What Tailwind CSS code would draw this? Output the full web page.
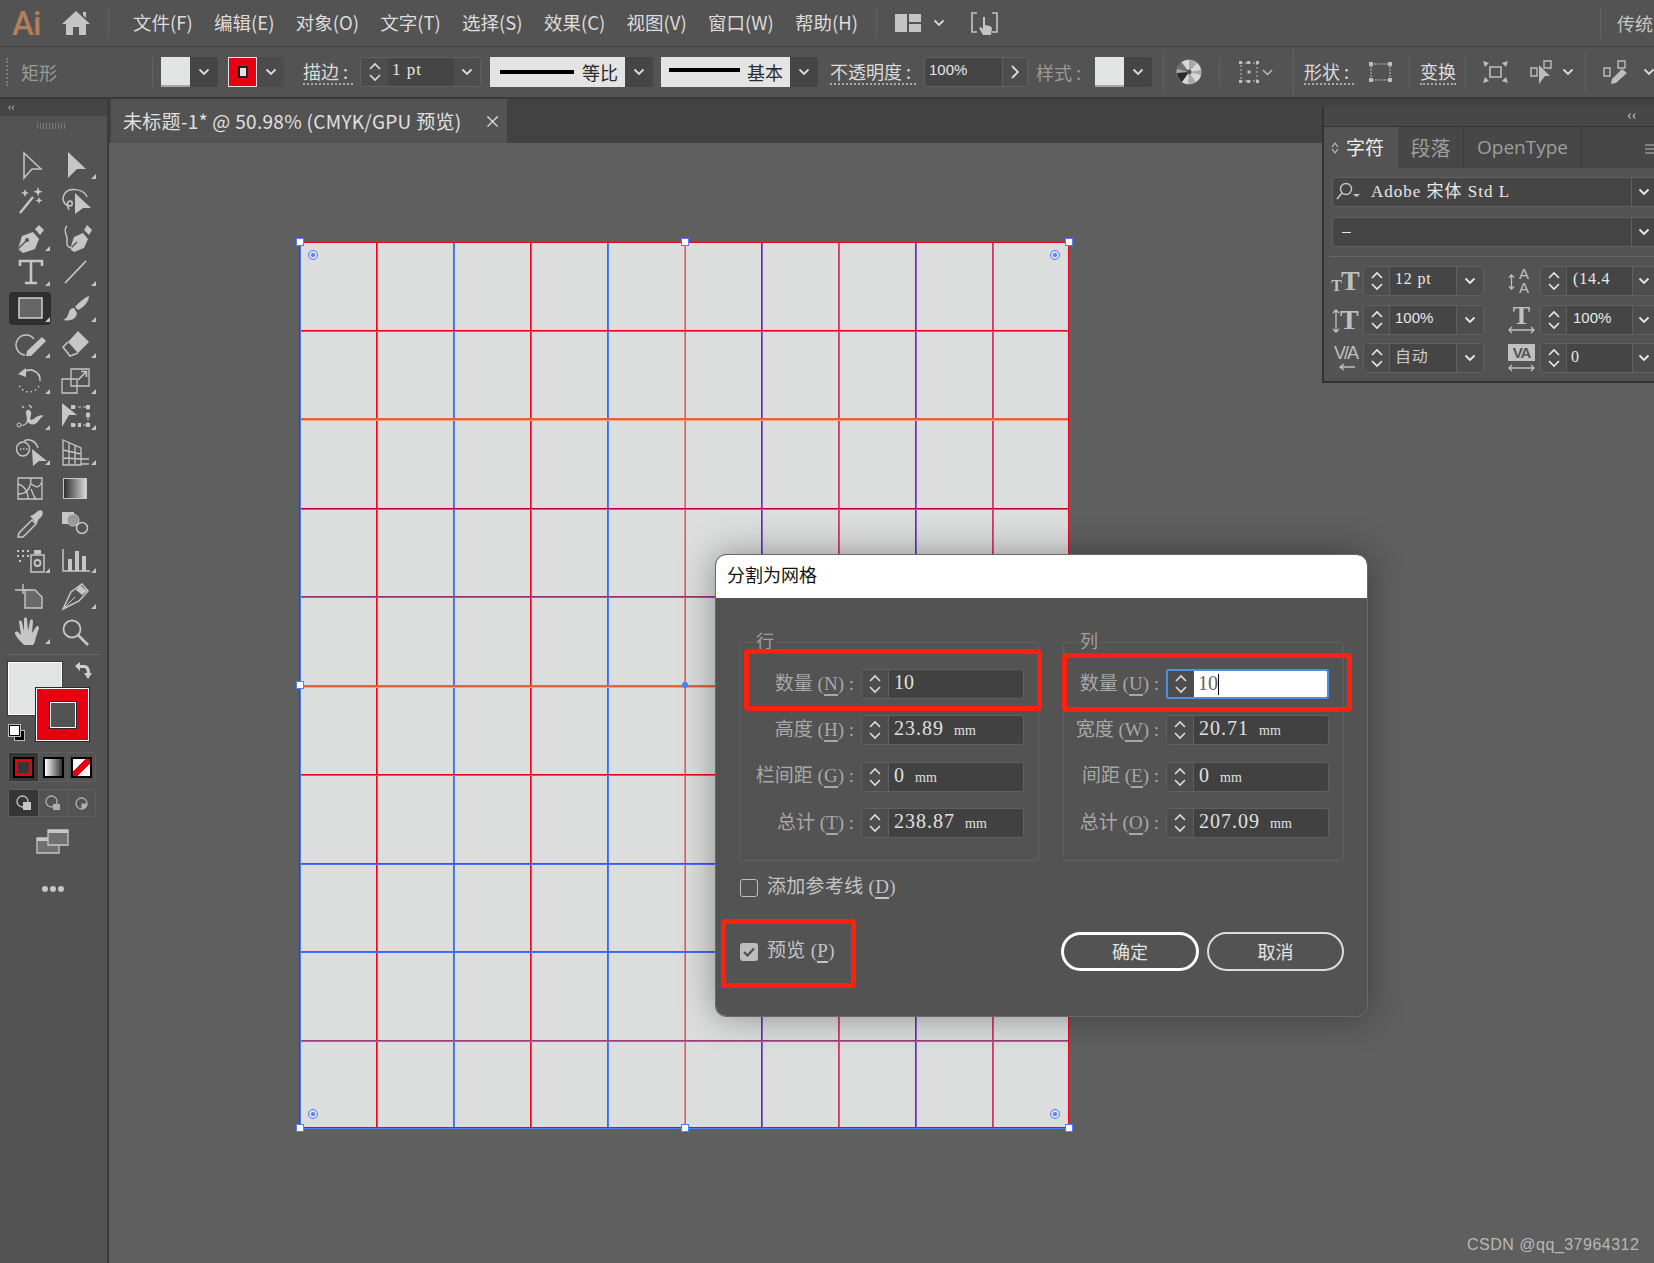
<!DOCTYPE html>
<html lang="zh-CN">
<head>
    <meta charset="UTF-8">
    <title>未标题-1* @ 50.98% (CMYK/GPU 预览)</title>
    <script src="https://cdn.jsdelivr.net/npm/@tailwindcss/browser@4"></script>
</head>
<body class="bg-[#5f5f5f]">
    <!-- shared small glyphs -->
    <svg class="hidden">
        <symbol id="chev" viewBox="0 0 12 8"><path d="M1.5 1.5 6 6l4.5-4.5" fill="none" stroke="currentColor" stroke-width="1.8"/></symbol>
        <symbol id="spin" viewBox="0 0 14 24"><path d="M2 9l5-5 5 5M2 15l5 5 5-5" fill="none" stroke="currentColor" stroke-width="1.6"/></symbol>
        <symbol id="tri" viewBox="0 0 40 36"><path d="M40 27v5h-5z" fill="currentColor"/></symbol>
    </svg>

    <div class="relative w-[1654px] h-[1263px] overflow-hidden flex flex-col font-['Noto_Sans_CJK_SC',sans-serif] text-[#dcdcdc] bg-[#5f5f5f]">

        <!-- menu bar -->
        <header class="h-[47px] shrink-0 flex items-center *:shrink-0 bg-[#535353] border-b border-[#404040] text-[18.5px] whitespace-nowrap">
            <span class="ml-[12px] w-[27px] text-[33px] leading-none text-[#b27f5b] font-['Roboto',sans-serif] font-medium tracking-[-1px]">Ai</span>
            <svg class="ml-[23px] w-[28px] h-[24px] text-[#c4c4c4]" viewBox="0 0 28 24"><path d="M14 0 28 13h-4v11h-7v-8h-6v8H4V13H0zM21 1h3v6l-3-3z" fill="currentColor"/></svg>
            <div class="ml-[18px] w-px h-[30px] bg-[#626262]"></div>
            <nav class="ml-[24px] w-[725px] flex justify-between">
                <span>文件(F)</span>
                <span>编辑(E)</span>
                <span>对象(O)</span>
                <span>文字(T)</span>
                <span>选择(S)</span>
                <span>效果(C)</span>
                <span>视图(V)</span>
                <span>窗口(W)</span>
                <span>帮助(H)</span>
            </nav>
            <div class="ml-[18px] w-px h-[30px] bg-[#626262]"></div>
            <svg class="ml-[18px] w-[26px] h-[18px] text-[#c4c4c4]" viewBox="0 0 26 18"><path d="M0 0h12v18H0zM14 0h12v8H14zM14 10h12v8H14z" fill="currentColor"/></svg>
            <svg class="ml-[12px] w-[12px] h-[8px] text-[#d8d8d8]"><use href="#chev"/></svg>
            <svg class="ml-[26px] w-[27px] h-[23px] text-[#c4c4c4]" viewBox="0 0 27 23"><path d="M6 1H1v19h5M21 1h5v19h-5" fill="none" stroke="currentColor" stroke-width="1.6"/><path d="M12 5h2v8l5 1 2 2-1 7h-8l-4-7 2-1 2 2z" fill="currentColor"/></svg>
            <div class="ml-[602px] w-px h-[30px] bg-[#626262]"></div>
            <span class="ml-[16px] text-[18px] text-[#c8c8c8]">传统</span>
        </header>

        <!-- control bar -->
        <div class="h-[52px] shrink-0 flex items-center *:shrink-0 bg-[#535353] border-b-2 border-[#3a3a3a] text-[18px] whitespace-nowrap">
            <div class="ml-[6px] w-[2px] h-[28px] border-l-2 border-dotted border-[#7a7a7a]"></div>
            <span class="ml-[13px] w-[36px] text-[#9a9a9a]">矩形</span>
            <div class="ml-[95px] w-px h-[30px] bg-[#626262]"></div>
            <div class="ml-[8px] w-[57px] h-[30px] flex rounded-[3px] bg-[#454545]">
                <div class="w-[29px] bg-[#e2e3e3] border-b-2 border-[#a8a8a8]"></div>
                <div class="flex-1 flex items-center justify-center"><svg class="w-[12px] h-[8px]"><use href="#chev"/></svg></div>
            </div>
            <div class="ml-[10px] w-[56px] h-[30px] flex rounded-[3px] bg-[#4b4b4b]">
                <div class="w-[29px] bg-[#e60012] border border-[#e2e3e3] flex items-center justify-center"><div class="w-[10px] h-[12px] bg-[#e2e3e3] border-2 border-[#222]"></div></div>
                <div class="flex-1 flex items-center justify-center"><svg class="w-[12px] h-[8px]"><use href="#chev"/></svg></div>
            </div>
            <span class="ml-[19px] w-[50px] border-b-2 border-dotted border-[#a8a8a8] leading-[24px]">描边 :</span>
            <div class="ml-[7px] w-[121px] h-[30px] flex rounded-[3px] border border-[#606060] bg-[#454545] font-['Liberation_Serif','Noto_Sans_CJK_SC',serif]">
                <div class="w-[27px] flex items-center justify-center bg-[#4d4d4d]"><svg class="w-[14px] h-[24px]"><use href="#spin"/></svg></div>
                <div class="w-[66px] pl-[4px] text-[17px] tracking-[1px] leading-[24px] text-[#e6e6e6]">1 pt</div>
                <div class="flex-1 flex items-center justify-center bg-[#4d4d4d]"><svg class="w-[12px] h-[8px]"><use href="#chev"/></svg></div>
            </div>
            <div class="ml-[9px] w-[163px] h-[30px] flex rounded-[3px] bg-[#454545]">
                <div class="w-[135px] bg-[#e4e4e4] flex items-center pl-[10px] text-[#2a2a2a]"><div class="w-[74px] h-[4px] bg-black"></div><span class="ml-[8px]">等比</span></div>
                <div class="flex-1 flex items-center justify-center"><svg class="w-[12px] h-[8px]"><use href="#chev"/></svg></div>
            </div>
            <div class="ml-[8px] w-[157px] h-[30px] flex rounded-[3px] bg-[#454545]">
                <div class="w-[129px] bg-[#e4e4e4] flex items-center pl-[8px] text-[#2a2a2a]"><div class="w-[71px] h-[4px] bg-black -mt-[4px]"></div><span class="ml-[7px]">基本</span></div>
                <div class="flex-1 flex items-center justify-center"><svg class="w-[12px] h-[8px]"><use href="#chev"/></svg></div>
            </div>
            <span class="ml-[12px] w-[86px] border-b-2 border-dotted border-[#a8a8a8] leading-[24px]">不透明度 :</span>
            <div class="ml-[8px] w-[104px] h-[30px] flex rounded-[3px] border border-[#606060] bg-[#454545]">
                <div class="w-[77px] pl-[4px] text-[15px] leading-[24px] text-[#e6e6e6] font-['Liberation_Sans',sans-serif]">100%</div>
                <div class="flex-1 flex items-center justify-center border-l border-[#606060] bg-[#4d4d4d]"><svg class="w-[8px] h-[14px]" viewBox="0 0 8 14"><path d="M1 1l6 6-6 6" fill="none" stroke="currentColor" stroke-width="1.8"/></svg></div>
            </div>
            <span class="ml-[8px] w-[48px] text-[#9a9a9a]">样式 :</span>
            <div class="ml-[11px] w-[57px] h-[30px] flex rounded-[3px] bg-[#454545]">
                <div class="w-[29px] bg-[#e2e3e3] border-b-2 border-[#a8a8a8]"></div>
                <div class="flex-1 flex items-center justify-center"><svg class="w-[12px] h-[8px]"><use href="#chev"/></svg></div>
            </div>
            <div class="ml-[11px] w-px h-[40px] bg-[#626262]"></div>
            <svg class="ml-[12px] w-[26px] h-[26px]" viewBox="0 0 26 26"><circle cx="13" cy="13" r="12.5" fill="#a8a8a8"/><path d="M13 13 6 3a12 12 0 0 1 7-2zM13 13l12-2a12 12 0 0 0-4-7zM13 13l-7 10a12 12 0 0 0 6 2zM13 13l12 3a12 12 0 0 1-5 7z" fill="#d8d8d8"/><path d="M13 13 1 14a12 12 0 0 0 5 9z" fill="#2c2c2c"/><path d="M13 13 1 10a12 12 0 0 1 4-7z" fill="#707070"/><circle cx="13" cy="13" r="2.5" fill="#535353"/></svg>
            <div class="ml-[17px] w-px h-[30px] bg-[#626262]"></div>
            <svg class="ml-[18px] w-[36px] h-[24px] text-[#bdbdbd]" viewBox="0 0 36 24"><path d="M3 3h16v18H3z" fill="none" stroke="currentColor" stroke-dasharray="2 2"/><path d="M1 1h3v3H1zM9 1h3v3H9zM18 1h3v3h-3zM1 20h3v3H1zM9 20h3v3H9zM18 20h3v3h-3zM9.500 10.500h3v3h-3z" fill="currentColor"/><path d="M25 10l4.500 4.500L34 10" fill="none" stroke="currentColor" stroke-width="1.4"/></svg>
            <div class="ml-[19px] w-px h-[46px] bg-[#626262]"></div>
            <span class="ml-[10px] w-[50px] border-b-2 border-dotted border-[#a8a8a8] leading-[24px]">形状 :</span>
            <svg class="ml-[15px] w-[23px] h-[20px] text-[#bdbdbd]" viewBox="0 0 23 20"><path d="M2 2h19v16H2z" fill="none" stroke="currentColor" stroke-dasharray="2 1"/><path d="M0 0h4v4H0zM19 0h4v4h-4zM0 16h4v4H0zM19 16h4v4h-4z" fill="currentColor"/></svg>
            <div class="ml-[17px] w-px h-[30px] bg-[#626262]"></div>
            <span class="ml-[10px] w-[36px] border-b-2 border-dotted border-[#a8a8a8] leading-[24px]">变换</span>
            <div class="ml-[9px] w-px h-[30px] bg-[#626262]"></div>
            <svg class="ml-[17px] w-[25px] h-[22px] text-[#bdbdbd]" viewBox="0 0 25 22"><path d="M7 6h11v10H7z" fill="none" stroke="currentColor" stroke-width="1.6"/><path d="M0 0l6 2-4 4zM25 0l-2 6-4-4zM0 22l2-6 4 4zM25 22l-6-2 4-4z" fill="currentColor"/></svg>
            <svg class="ml-[21px] w-[25px] h-[24px] text-[#bdbdbd]" viewBox="0 0 25 24"><path d="M2 8h6v8H2zM15 1h7v7h-7z" fill="none" stroke="currentColor" stroke-width="1.4"/><path d="M10 5l11 11h-5l-6 8z" fill="currentColor"/></svg>
            <svg class="ml-[8px] w-[12px] h-[8px]"><use href="#chev"/></svg>
            <div class="ml-[11px] w-px h-[40px] bg-[#626262]"></div>
            <svg class="ml-[16px] w-[26px] h-[24px] text-[#bdbdbd]" viewBox="0 0 26 24"><path d="M2 8h6v8H2zM16 1h7v7h-7z" fill="none" stroke="currentColor" stroke-width="1.4"/><path d="M20 9l5 4-11 10-5 1 1-5z" fill="currentColor"/></svg>
            <svg class="ml-[15px] w-[12px] h-[8px]"><use href="#chev"/></svg>
        </div>

        <div class="flex-1 flex min-h-0">
            <!-- tools -->
            <aside class="w-[109px] shrink-0 bg-[#535353] border-r-2 border-[#3a3a3a] flex flex-col">
                <div class="h-[17px] bg-[#454545] pl-[8px] text-[11px] leading-[14px] text-[#c8c8c8]">‹‹</div>
                <div class="mt-[7px] ml-[37px] w-[29px] h-[6px] bg-[repeating-linear-gradient(90deg,#7a7a7a_0,#7a7a7a_1px,transparent_1px,transparent_3px)]"></div>
                <div class="mt-[18px] ml-[10px] w-[86px] grid grid-cols-[40px_40px] gap-x-[6px] auto-rows-[35.8px] text-[#c6c6c6]">
                    <svg class="w-10 h-9" viewBox="0 0 40 36"><path d="M14 6 31 22H22L14 31Z" fill="none" stroke="currentColor" stroke-width="1.5"/></svg>
                    <svg class="w-10 h-9" viewBox="0 0 40 36"><path d="M12 5 30 22H21L12 31Z" fill="currentColor"/><use href="#tri"/></svg>

                    <svg class="w-10 h-9" viewBox="0 0 40 36"><path d="M10 30 23 14" stroke="currentColor" stroke-width="2.4"/><path d="M15 6l1.200 3 3 1-3 1-1.200 3-1.200-3-3-1 3-1zM28 4l1.200 3.500 3.500 1.200-3.500 1.200L28 13.500l-1.200-3.600-3.500-1.200 3.500-1.200zM29 14l1 2.500 2.500 1-2.500 1-1 2.500-1-2.500-2.500-1 2.500-1z" fill="currentColor"/></svg>
                    <svg class="w-10 h-9" viewBox="0 0 40 36"><path d="M31 14C28 6 12 3 8 12c-3 6 2 11 6 11 3 0 3-5 0-5s-3 5-1 9" fill="none" stroke="currentColor" stroke-width="1.500"/><path d="M19 10 35 25H27L19 31Z" fill="currentColor"/></svg>

                    <svg class="w-10 h-9" viewBox="0 0 40 36"><path d="M8 30l4-13 11-4 6 7-4 10-12 4z" fill="currentColor"/><path d="M25 10l4-4 5 5-4 5z" fill="currentColor"/><path d="M8 30l8-8" stroke="#535353" stroke-width="1.4"/><circle cx="17" cy="21" r="2" fill="#535353"/><use href="#tri"/></svg>
                    <svg class="w-10 h-9" viewBox="0 0 40 36"><path d="M14 30l4-12 9-4 5 6-4 9-10 4z" fill="currentColor"/><path d="M28 11l3-5 5 5-3 5z" fill="currentColor"/><path d="M14 30l7-7" stroke="#535353" stroke-width="1.400"/><path d="M11 7c-5 5 1 9 0 14-1 5 1 8 5 8" fill="none" stroke="currentColor" stroke-width="1.500"/></svg>

                    <svg class="w-10 h-9" viewBox="0 0 40 36"><path d="M10 12V7h22v5M21 7v22M15 29h12" fill="none" stroke="currentColor" stroke-width="2.600"/><use href="#tri"/></svg>
                    <svg class="w-10 h-9" viewBox="0 0 40 36"><path d="M9 29 30 7" stroke="currentColor" stroke-width="1.800"/><use href="#tri"/></svg>

                    <svg class="w-10 h-9 overflow-visible" viewBox="0 0 40 36"><rect x="-1" y="2" width="42" height="33" rx="4" fill="#2f2f2f"/><rect x="9" y="8" width="23" height="20" fill="#666" stroke="#cfcfcf" stroke-width="1.500"/><use href="#tri"/></svg>
                    <svg class="w-10 h-9" viewBox="0 0 40 36"><path d="M33 6c0 6-6 12-11 14l-3-3C23 12 28 8 33 6z" fill="currentColor"/><path d="M18 18c-5 0-5 5-6 7-1 3-3 4-5 5 4 1 13 1 14-7z" fill="currentColor"/><use href="#tri"/></svg>

                    <svg class="w-10 h-9" viewBox="0 0 40 36"><path d="M24 13A10 10 0 1 0 15 29" fill="none" stroke="currentColor" stroke-width="1.500"/><path d="M16 30l1-5 15-14 4 4-15 15z" fill="currentColor"/><use href="#tri"/></svg>
                    <svg class="w-10 h-9" viewBox="0 0 40 36"><path d="M12 16 22 5l11 11-11 11z" fill="currentColor"/><path d="M12 16l-5 5 7 9 8-3" fill="none" stroke="currentColor" stroke-width="1.500"/><use href="#tri"/></svg>

                    <svg class="w-10 h-9" viewBox="0 0 40 36"><path d="M13 11a10 10 0 0 1 17 8" fill="none" stroke="currentColor" stroke-width="1.600"/><path d="M29 24a11 11 0 0 1-20-1" fill="none" stroke="currentColor" stroke-width="1.500" stroke-dasharray="1.500 3"/><path d="M8 12l8-6v9z" fill="currentColor"/><use href="#tri"/></svg>
                    <svg class="w-10 h-9" viewBox="0 0 40 36"><path d="M15 7h18v17H15zM6 17h15v14H6z" fill="none" stroke="currentColor" stroke-width="1.300"/><path d="M22 18l8-8M25 9.500h5.500V15" fill="none" stroke="currentColor" stroke-width="1.600"/><use href="#tri"/></svg>

                    <svg class="w-10 h-9" viewBox="0 0 40 36"><path d="M9 27c8 1 9-5 7-11-1-4 3-6 5-2 1 3-2 6 0 8 4-1 8-7 13-4-3 0-5 6-9 8-3 1-6 0-7-2-2 3-5 5-9 3z" fill="currentColor"/><circle cx="9" cy="27" r="2" fill="#535353" stroke="currentColor"/><path d="M19 7l3 3M12 8l2 2" stroke="currentColor" stroke-width="1.400"/><use href="#tri"/></svg>
                    <svg class="w-10 h-9" viewBox="0 0 40 36"><path d="M6 5 21 17H13L6 29Z" fill="currentColor"/><path d="M17 9h15v18H17" fill="none" stroke="currentColor" stroke-dasharray="3 2"/><path d="M15 7h4v4h-4zM30 7h4v4h-4zM30 25h4v4h-4zM15 25h4v4h-4zM22 25h3v4h-3zM30 15h4v4h-4z" fill="currentColor"/><use href="#tri"/></svg>

                    <svg class="w-10 h-9" viewBox="0 0 40 36"><ellipse cx="13" cy="16" rx="6.500" ry="7" fill="none" stroke="currentColor" stroke-width="1.400"/><path d="M14 8c5-3 12 0 14 7" fill="none" stroke="currentColor" stroke-width="1.400"/><path d="M10 16h9" stroke="currentColor" stroke-dasharray="1.500 1.500" stroke-width="1.500"/><path d="M22 16 37 28H29L23 33Z" fill="currentColor"/><use href="#tri"/></svg>
                    <svg class="w-10 h-9" viewBox="0 0 40 36"><path d="M7 7l18 8v17H7zM13 9v23M19 12v20M7 17l18 4M7 25l18 1M25 26h8M25 31h8" fill="none" stroke="currentColor" stroke-width="1.300"/><use href="#tri"/></svg>

                    <svg class="w-10 h-9" viewBox="0 0 40 36"><path d="M8 9h24v21H8zM8 25c8 0 13-4 13-16M8 15c5 1 10 6 10 15M21 15c4 2 7 6 11-2M21 20c2 4 2 7 5 10" fill="none" stroke="currentColor" stroke-width="1.300"/></svg>
                    <svg class="w-10 h-9" viewBox="0 0 40 36"><defs><linearGradient id="gradTool"><stop offset="0" stop-color="#2c2c2c"/><stop offset="1" stop-color="#dcdcdc"/></linearGradient></defs><rect x="7.500" y="9.500" width="23" height="20" fill="url(#gradTool)" stroke="currentColor"/></svg>

                    <svg class="w-10 h-9" viewBox="0 0 40 36"><path d="M8 32l1-4 13-13 4 4-13 13z" fill="none" stroke="currentColor" stroke-width="1.500"/><path d="M20 11l3-1 5-4c4-2 6 1 4 5l-4 4-1 4z" fill="currentColor"/></svg>
                    <svg class="w-10 h-9" viewBox="0 0 40 36"><path d="M6 7h12v12H6z" fill="currentColor"/><circle cx="17" cy="15" r="6" fill="#999" stroke="currentColor"/><circle cx="26" cy="23" r="5.500" fill="#535353" stroke="currentColor" stroke-width="1.500"/></svg>

                    <svg class="w-10 h-9" viewBox="0 0 40 36"><path d="M21 14h13v17H21z" fill="none" stroke="currentColor" stroke-width="1.500"/><circle cx="27.500" cy="22" r="3" fill="none" stroke="currentColor" stroke-width="1.800"/><path d="M24 9h7v4h-7z" fill="currentColor"/><path d="M7 9h2v2H7zM12 9h2v2h-2zM17 9h2v2h-2zM7 14h2v2H7zM12 14h2v2h-2zM17 14h2v2h-2zM9 19h2v2H9z" fill="currentColor"/><use href="#tri"/></svg>
                    <svg class="w-10 h-9" viewBox="0 0 40 36"><path d="M7 8v22h27" fill="none" stroke="currentColor" stroke-width="1.500"/><path d="M12 18h4v12h-4zM19 10h4v20h-4zM26 15h4v15h-4z" fill="currentColor"/><use href="#tri"/></svg>

                    <svg class="w-10 h-9" viewBox="0 0 40 36"><path d="M13 7v10M5 13h16" stroke="currentColor" stroke-width="1.400" fill="none"/><path d="M15 13h10l7 7v11H15z" fill="#6a6a6a" stroke="currentColor" stroke-width="1.400"/></svg>
                    <svg class="w-10 h-9" viewBox="0 0 40 36"><path d="M7 32 15 15 26 7l6 7-9 10z" fill="none" stroke="currentColor" stroke-width="1.500"/><path d="M24 8l7 6-5 4-6-5z" fill="currentColor"/><path d="M7 32l12-12" stroke="currentColor"/><use href="#tri"/></svg>

                    <svg class="w-10 h-9" viewBox="0 0 40 36"><path d="M14 33c-3-3-7-7-9-11-1-2 2-3 3-2l3 3-2-13c0-2 2-2 3 0l2 9 0-12c0-2 3-2 3 0l1 12 2-10c0-2 3-2 3 0l-1 12 4-6c1-2 3-1 3 1l-3 9c-1 3-1 6-3 8z" fill="currentColor"/><use href="#tri"/></svg>
                    <svg class="w-10 h-9" viewBox="0 0 40 36"><circle cx="16" cy="17" r="8.500" fill="none" stroke="currentColor" stroke-width="1.800"/><path d="M22 23l10 10" stroke="currentColor" stroke-width="2.600"/></svg>
                </div>
                <div class="mt-[6px] mx-[6px] h-px bg-[#666]"></div>
                <!-- fill / stroke -->
                <div class="relative mt-[7px] h-[79px] shrink-0">
                    <div class="absolute left-[8px] top-0 w-[54px] h-[53px] bg-[#e2e3e3] border border-white outline outline-1 outline-[#3a3a3a]"></div>
                    <div class="absolute left-[36px] top-[26px] w-[53px] h-[53px] bg-[#e60012] border border-white outline outline-1 outline-[#2a2a2a] flex items-center justify-center">
                        <div class="w-[26px] h-[26px] bg-[#535353] border border-white outline outline-1 outline-[#2a2a2a]"></div>
                    </div>
                    <svg class="absolute left-[74px] top-0 w-[18px] h-[18px] text-[#cfcfcf]" viewBox="0 0 18 18"><path d="M1 4l5-4v3h4c4 0 6 3 6 8h2l-4 6-4-6h3c0-3-1-5-3-5H6v3z" fill="currentColor"/></svg>
                    <div class="absolute left-[9px] top-[63px] w-[16px] h-[16px]">
                        <div class="absolute left-[5px] top-[5px] w-[11px] h-[11px] bg-black border border-[#bbb]"></div>
                        <div class="absolute left-0 top-0 w-[11px] h-[11px] bg-white border border-black outline outline-1 outline-[#bbb]"></div>
                    </div>
                </div>
                <!-- colour / gradient / none -->
                <div class="mt-[11px] ml-[8px] w-[88px] h-[30px] shrink-0 flex rounded-[3px] border border-[#5f5f5f]">
                    <div class="w-[29px] bg-[#363636] flex items-center justify-center"><div class="w-[21px] h-[21px] border-2 border-black bg-[#e60012] p-[3px]"><div class="w-full h-full bg-[#363636]"></div></div></div>
                    <div class="w-[30px] border-x border-[#5f5f5f] flex items-center justify-center"><div class="w-[21px] h-[21px] border-2 border-black bg-[linear-gradient(90deg,#fff,#333)]"></div></div>
                    <div class="flex-1 flex items-center justify-center"><div class="w-[21px] h-[21px] border-2 border-black bg-[linear-gradient(-45deg,#fff_0,#fff_38%,#e60012_38%,#e60012_62%,#fff_62%,#fff_100%)]"></div></div>
                </div>
                <!-- draw modes -->
                <div class="mt-[7px] ml-[8px] w-[88px] h-[28px] shrink-0 flex rounded-[3px] border border-[#5f5f5f]">
                    <div class="w-[29px] bg-[#363636] flex items-center justify-center"><svg class="w-[16px] h-[16px] text-[#c6c6c6]" viewBox="0 0 16 16"><circle cx="6.500" cy="6.500" r="5.500" fill="none" stroke="currentColor" stroke-width="1.300"/><path d="M7 7h8v8H7z" fill="currentColor"/></svg></div>
                    <div class="w-[30px] border-x border-[#5f5f5f] flex items-center justify-center"><svg class="w-[16px] h-[16px] text-[#b0b0b0]" viewBox="0 0 16 16"><circle cx="6.500" cy="6.500" r="5.500" fill="none" stroke="currentColor" stroke-width="1.300"/><path d="M8 9h7v6H8z" fill="currentColor"/></svg></div>
                    <div class="flex-1 flex items-center justify-center"><svg class="w-[13px] h-[13px] text-[#b0b0b0]" viewBox="0 0 13 13"><circle cx="6.500" cy="6.500" r="5.500" fill="none" stroke="currentColor" stroke-width="1.300"/><path d="M6.500 6.500h6a6 6 0 0 1-6 6z" fill="currentColor"/></svg></div>
                </div>
                <svg class="mt-[12px] ml-[36px] w-[33px] h-[25px] text-[#c6c6c6]" viewBox="0 0 33 25"><path d="M1 9h22v15H1z" fill="#707070" stroke="currentColor" stroke-width="1.300"/><path d="M1 9h22v3H1z" fill="currentColor"/><path d="M12 1h20v15H12z" fill="#707070" stroke="currentColor" stroke-width="1.300"/><path d="M12 1h20v3H12z" fill="currentColor"/></svg>
                <div class="mt-[32px] ml-[42px] flex gap-[2px]">
                    <div class="w-[6px] h-[6px] rounded-full bg-[#c6c6c6]"></div>
                    <div class="w-[6px] h-[6px] rounded-full bg-[#c6c6c6]"></div>
                    <div class="w-[6px] h-[6px] rounded-full bg-[#c6c6c6]"></div>
                </div>
            </aside>

            <main class="flex-1 flex flex-col min-w-0">
                <!-- doc tab -->
                <div class="h-[44px] shrink-0 bg-[#424242] flex">
                    <div class="ml-[2px] w-[396px] bg-[#535353] flex items-center pl-[12px] text-[19px] tracking-[.3px] text-[#e0e0e0] whitespace-nowrap">
                        <span>未标题-1* @ 50.98% (CMYK/GPU 预览)</span>
                        <span class="absolute left-[484px] text-[17px]">×</span>
                    </div>
                </div>
                <!-- canvas -->
                <div class="relative flex-1 bg-[#5f5f5f]">
                    <div class="absolute left-[191px] top-[99px] w-[769px] h-[886px] bg-[#dcdddd] shadow-[-1px_0_0_#a02030]">
                        <div class="absolute inset-0 flex">
                            <div class="flex-1 border-r border-[#ff0018] shadow-[1px_0_0_#9060c8]"></div>
                            <div class="flex-1 border-r border-[#d03a60] shadow-[1px_0_0_#5080ff]"></div>
                            <div class="flex-1 border-r border-[#ff0018] shadow-[1px_0_0_#9060c8]"></div>
                            <div class="flex-1 border-r border-[#d03a60] shadow-[1px_0_0_#5080ff]"></div>
                            <div class="flex-1 border-r border-[#e59090] shadow-[1px_0_0_#5080ff]"></div>
                            <div class="flex-1 border-r border-[#ff0018] shadow-[1px_0_0_#9060c8]"></div>
                            <div class="flex-1 border-r border-[#d03a60] shadow-[1px_0_0_#5080ff]"></div>
                            <div class="flex-1 border-r border-[#ff0018] shadow-[1px_0_0_#9060c8]"></div>
                            <div class="flex-1 border-r border-[#d03a60] shadow-[1px_0_0_#5080ff]"></div>
                            <div class="flex-1"></div>
                        </div>
                        <div class="absolute inset-0 flex flex-col">
                            <div class="flex-1 border-b border-[#f00020] shadow-[0_1px_0_#5080ff]"></div>
                            <div class="flex-1 border-b-2 border-[#e8603c] shadow-[0_1px_0_#f0a080]"></div>
                            <div class="flex-1 border-b border-[#c00030] shadow-[0_1px_0_#5080ff]"></div>
                            <div class="flex-1 border-b border-[#a03070] shadow-[0_1px_0_#4f70ff]"></div>
                            <div class="flex-1 border-b-2 border-[#e8603c] shadow-[0_1px_0_#f0a080]"></div>
                            <div class="flex-1 border-b border-[#f00020] shadow-[0_1px_0_#5080ff]"></div>
                            <div class="flex-1 border-b border-[#9a3a80] shadow-[0_1px_0_#4f70ff]"></div>
                            <div class="flex-1 border-b border-[#c04060] shadow-[0_1px_0_#3f6fff]"></div>
                            <div class="flex-1 border-b border-[#a04070] shadow-[0_1px_0_#5080ff]"></div>
                            <div class="flex-1"></div>
                        </div>
                        <!-- outer frame -->
                        <div class="absolute inset-0 border-y border-[#f00020] border-r border-r-[#f00020] border-l border-l-[#5080ff] shadow-[0_1px_0_#5080ff]"></div>
                        <!-- bounding box handles -->
                        <div class="absolute -left-[4px] -top-[4px] w-[8px] h-[8px] bg-white border border-[#4f80ff]"></div>
                        <div class="absolute left-[381px] -top-[4px] w-[8px] h-[8px] bg-white border border-[#4f80ff]"></div>
                        <div class="absolute -right-[4px] -top-[4px] w-[8px] h-[8px] bg-white border border-[#4f80ff]"></div>
                        <div class="absolute -left-[4px] top-[439px] w-[8px] h-[8px] bg-white border border-[#4f80ff]"></div>
                        <div class="absolute -left-[4px] -bottom-[4px] w-[8px] h-[8px] bg-white border border-[#4f80ff]"></div>
                        <div class="absolute left-[381px] -bottom-[4px] w-[8px] h-[8px] bg-white border border-[#4f80ff]"></div>
                        <div class="absolute -right-[4px] -bottom-[4px] w-[8px] h-[8px] bg-white border border-[#4f80ff]"></div>
                        <div class="absolute left-[382px] top-[440px] w-[6px] h-[6px] rounded-full bg-[#4f80ff]"></div>
                        <!-- live corners -->
                        <div class="absolute left-[8px] top-[8px] w-[10px] h-[10px] rounded-full border border-[#4f80ff] p-[2px]"><div class="w-full h-full rounded-full bg-[#4f80ff]"></div></div>
                        <div class="absolute right-[9px] top-[8px] w-[10px] h-[10px] rounded-full border border-[#4f80ff] p-[2px]"><div class="w-full h-full rounded-full bg-[#4f80ff]"></div></div>
                        <div class="absolute left-[8px] bottom-[9px] w-[10px] h-[10px] rounded-full border border-[#4f80ff] p-[2px]"><div class="w-full h-full rounded-full bg-[#4f80ff]"></div></div>
                        <div class="absolute right-[9px] bottom-[9px] w-[10px] h-[10px] rounded-full border border-[#4f80ff] p-[2px]"><div class="w-full h-full rounded-full bg-[#4f80ff]"></div></div>
                    </div>
                </div>
            </main>
        </div>

        <!-- character panel -->
        <section class="absolute left-[1322px] top-[107px] w-[340px] h-[276px] bg-[#535353] border-l-2 border-b-2 border-[#333] rounded-tl-[3px] flex flex-col font-['Liberation_Serif','Noto_Sans_CJK_SC',serif]">
            <div class="h-[20px] shrink-0 bg-[#474747] border-b border-[#333] pl-[303px] text-[14px] leading-[18px] text-[#c8c8c8]">‹‹</div>
            <div class="h-[41px] shrink-0 flex bg-[#474747] text-[20px] text-[#9e9e9e] font-['Noto_Sans_CJK_SC',sans-serif]">
                <div class="w-[74px] bg-[#535353] flex items-center pl-[7px] text-[#eee]">
                    <svg class="w-[8px] h-[12px] text-[#aaa] mr-[7px]" viewBox="0 0 8 12"><path d="M1 5l3-4 3 4M1 7l3 4 3-4" fill="none" stroke="currentColor" stroke-width="1.300"/></svg>
                    <span class="text-[19px]">字符</span>
                </div>
                <div class="w-[66px] border-r border-[#3c3c3c] flex items-center justify-center">段落</div>
                <div class="w-[118px] border-r border-[#3c3c3c] flex items-center justify-center font-['Open_Sans',sans-serif] text-[19px]">OpenType</div>
                <svg class="ml-[63px] mt-[17px] w-[11px] h-[10px] text-[#bbb]" viewBox="0 0 11 10"><path d="M0 1h11M0 5h11M0 9h11" stroke="currentColor" stroke-width="1.200"/></svg>
            </div>
            <div class="mt-[9px] ml-[8px] w-[330px] h-[30px] shrink-0 flex items-center rounded-[3px] border border-[#606060] bg-[#454545] text-[17px] tracking-[1px] text-[#e8e8e8]">
                <svg class="ml-[2px] w-[26px] h-[20px] text-[#c6c6c6]" viewBox="0 0 26 20"><circle cx="11" cy="7" r="5.500" fill="none" stroke="currentColor" stroke-width="1.400"/><path d="M7 11l-5 6" stroke="currentColor" stroke-width="1.600"/><path d="M18 12h7l-3.500 3z" fill="currentColor"/></svg>
                <span class="ml-[10px] whitespace-nowrap">Adobe 宋体 Std L</span>
                <div class="ml-auto w-[30px] h-full border-l border-[#606060] flex items-center pl-[6px]"><svg class="w-[12px] h-[8px]"><use href="#chev"/></svg></div>
            </div>
            <div class="mt-[10px] ml-[8px] w-[330px] h-[30px] shrink-0 flex items-center rounded-[3px] border border-[#606060] bg-[#454545] text-[#e8e8e8]">
                <span class="ml-[9px] w-[9px] h-px bg-[#e8e8e8]"></span>
                <div class="ml-auto w-[30px] h-full border-l border-[#606060] flex items-center pl-[6px]"><svg class="w-[12px] h-[8px]"><use href="#chev"/></svg></div>
            </div>
            <div class="mt-[9px] ml-[6px] w-[332px] h-px shrink-0 bg-[#666]"></div>
            <div class="mt-[9px] ml-[8px] grid grid-cols-[176px_150px] gap-y-[8.500px] text-[16px] tracking-[.8px] text-[#e8e8e8]">
                <div class="flex items-center h-[30px]">
                    <div class="w-[27px] h-[26px] shrink-0 flex items-end justify-center text-[#c0c0c0] font-bold tracking-normal leading-none"><span class="text-[16px] -mr-[1px]">T</span><span class="text-[28px] -mb-[1px]">T</span></div>
                    <div class="ml-[4px] w-[121px] h-[30px] flex rounded-[3px] border border-[#606060] bg-[#454545]">
                        <div class="w-[26px] flex items-center justify-center bg-[#4d4d4d] border-r border-[#606060]"><svg class="w-[14px] h-[24px]"><use href="#spin"/></svg></div>
                        <div class="w-[66px] pl-[5px] leading-[24px]">12 pt</div>
                        <div class="flex-1 flex items-center justify-center bg-[#4d4d4d] border-l border-[#606060]"><svg class="w-[12px] h-[8px]"><use href="#chev"/></svg></div>
                    </div>
                </div>
                <div class="flex items-center h-[30px]">
                    <div class="relative w-[27px] h-[30px] shrink-0 text-[#c0c0c0] font-['Liberation_Sans',sans-serif] text-[15px] tracking-normal leading-[15px]">
                        <svg class="absolute left-0 top-[8px] w-[7px] h-[16px]" viewBox="0 0 7 16"><path d="M3.500 1v14M1 3.500 3.500 1 6 3.500M1 12.500 3.500 15 6 12.500" fill="none" stroke="currentColor" stroke-width="1.300"/></svg>
                        <span class="absolute left-[11px] top-0">A</span>
                        <span class="absolute left-[11px] top-[14px]">A</span>
                    </div>
                    <div class="ml-[5px] w-[118px] h-[30px] flex rounded-l-[3px] border border-r-0 border-[#606060] bg-[#454545]">
                        <div class="w-[26px] shrink-0 flex items-center justify-center bg-[#4d4d4d] border-r border-[#606060]"><svg class="w-[14px] h-[24px]"><use href="#spin"/></svg></div>
                        <div class="w-[65px] shrink-0 pl-[6px] leading-[24px] whitespace-nowrap">(14.4</div>
                        <div class="flex-1 flex items-center pl-[5px] bg-[#4d4d4d] border-l border-[#606060]"><svg class="w-[12px] h-[8px]"><use href="#chev"/></svg></div>
                    </div>
                </div>
                <div class="flex items-center h-[30px]">
                    <div class="w-[27px] h-[26px] shrink-0 flex items-end text-[#c0c0c0] font-bold tracking-normal leading-none">
                        <svg class="w-[8px] h-[24px]" viewBox="0 0 8 24"><path d="M4 1v22M1 4l3-3 3 3M1 20l3 3 3-3" fill="none" stroke="currentColor" stroke-width="1.300"/></svg>
                        <span class="text-[28px] -mb-[1px]">T</span>
                    </div>
                    <div class="ml-[4px] w-[121px] h-[30px] flex rounded-[3px] border border-[#606060] bg-[#454545]">
                        <div class="w-[26px] flex items-center justify-center bg-[#4d4d4d] border-r border-[#606060]"><svg class="w-[14px] h-[24px]"><use href="#spin"/></svg></div>
                        <div class="w-[66px] pl-[5px] leading-[24px] font-['Liberation_Sans',sans-serif] text-[15px] tracking-normal">100%</div>
                        <div class="flex-1 flex items-center justify-center bg-[#4d4d4d] border-l border-[#606060]"><svg class="w-[12px] h-[8px]"><use href="#chev"/></svg></div>
                    </div>
                </div>
                <div class="flex items-center h-[30px]">
                    <div class="w-[27px] h-[28px] shrink-0 flex flex-col items-center text-[#c0c0c0] font-bold tracking-normal leading-[20px]">
                        <span class="text-[26px] h-[20px]">T</span>
                        <svg class="w-[27px] h-[8px]" viewBox="0 0 27 8"><path d="M1 4h25M4 1 1 4l3 3M23 1l3 3-3 3" fill="none" stroke="currentColor" stroke-width="1.300"/></svg>
                    </div>
                    <div class="ml-[5px] w-[118px] h-[30px] flex rounded-l-[3px] border border-r-0 border-[#606060] bg-[#454545]">
                        <div class="w-[26px] shrink-0 flex items-center justify-center bg-[#4d4d4d] border-r border-[#606060]"><svg class="w-[14px] h-[24px]"><use href="#spin"/></svg></div>
                        <div class="w-[65px] shrink-0 pl-[6px] leading-[24px] font-['Liberation_Sans',sans-serif] text-[15px] tracking-normal">100%</div>
                        <div class="flex-1 flex items-center pl-[5px] bg-[#4d4d4d] border-l border-[#606060]"><svg class="w-[12px] h-[8px]"><use href="#chev"/></svg></div>
                    </div>
                </div>
                <div class="flex items-center h-[30px]">
                    <div class="w-[27px] h-[28px] shrink-0 flex flex-col items-center text-[#c0c0c0] font-['Liberation_Sans',sans-serif] tracking-[-2px] leading-[18px]">
                        <span class="text-[18px] h-[19px]">V/A</span>
                        <svg class="w-[27px] h-[8px]" viewBox="0 0 27 8"><path d="M8 4h15M12 1 8 4l4 3" fill="none" stroke="currentColor" stroke-width="1.400"/></svg>
                    </div>
                    <div class="ml-[4px] w-[121px] h-[30px] flex rounded-[3px] border border-[#606060] bg-[#454545]">
                        <div class="w-[26px] flex items-center justify-center bg-[#4d4d4d] border-r border-[#606060]"><svg class="w-[14px] h-[24px]"><use href="#spin"/></svg></div>
                        <div class="w-[66px] pl-[5px] leading-[26px] text-[#c8c8c8]">自动</div>
                        <div class="flex-1 flex items-center justify-center bg-[#4d4d4d] border-l border-[#606060]"><svg class="w-[12px] h-[8px]"><use href="#chev"/></svg></div>
                    </div>
                </div>
                <div class="flex items-center h-[30px]">
                    <div class="w-[27px] h-[28px] shrink-0 flex flex-col items-center font-['Liberation_Sans',sans-serif] tracking-[-1px]">
                        <span class="w-[27px] h-[17px] bg-[#c0c0c0] text-center text-[15px] font-bold leading-[17px] text-[#535353]">VA</span>
                        <svg class="mt-[3px] w-[27px] h-[8px] text-[#c0c0c0]" viewBox="0 0 27 8"><path d="M1 4h25M4 1 1 4l3 3M23 1l3 3-3 3" fill="none" stroke="currentColor" stroke-width="1.300"/></svg>
                    </div>
                    <div class="ml-[5px] w-[118px] h-[30px] flex rounded-l-[3px] border border-r-0 border-[#606060] bg-[#454545]">
                        <div class="w-[26px] shrink-0 flex items-center justify-center bg-[#4d4d4d] border-r border-[#606060]"><svg class="w-[14px] h-[24px]"><use href="#spin"/></svg></div>
                        <div class="w-[65px] shrink-0 pl-[4px] leading-[26px]">0</div>
                        <div class="flex-1 flex items-center pl-[5px] bg-[#4d4d4d] border-l border-[#606060]"><svg class="w-[12px] h-[8px]"><use href="#chev"/></svg></div>
                    </div>
                </div>
            </div>
        </section>

        <!-- split into grids dialog -->
        <section class="absolute left-[716px] top-[555px] w-[651px] h-[461px] rounded-[10px] bg-[#535353] outline outline-1 outline-[#6a6a6a] shadow-[0_0_36px_rgba(0,0,0,.38)] font-['Liberation_Serif','Noto_Sans_CJK_SC',serif] text-[19px] text-[#a8a8a8]">
            <div class="h-[43px] rounded-t-[10px] bg-white pl-[11px] text-[18px] leading-[39px] text-[#111] font-['Noto_Sans_CJK_SC',sans-serif]">分割为网格</div>
            <div class="pt-[44px] pl-[23px] pr-[23px] flex gap-[24px]">
                <!-- rows -->
                <fieldset class="relative w-[300px] h-[219px] rounded-[3px] border border-[#606060] pt-[26px] pr-[14px] flex flex-col gap-[16.300px]">
                    <span class="absolute left-[14px] -top-[11px] px-[2px] bg-[#535353] leading-[20px] text-[18px] text-[#a0a0a0]">行</span>
                    <div class="flex items-center h-[30px]">
                        <span class="flex-1 text-right pr-[7px] whitespace-nowrap">数量 (<span class="border-b-2 border-[#a8a8a8]">N</span>) :</span>
                        <div class="w-[163px] h-[30px] flex rounded-[3px] border border-[#606060] bg-[#414141]">
                            <div class="w-[27px] flex items-center justify-center bg-[#4d4d4d] border-r border-[#606060] text-[#dcdcdc]"><svg class="w-[14px] h-[24px]"><use href="#spin"/></svg></div>
                            <div class="pl-[5px] text-[20px] leading-[24px] text-[#e0e0e0]">10</div>
                        </div>
                    </div>
                    <div class="flex items-center h-[30px]">
                        <span class="flex-1 text-right pr-[7px] whitespace-nowrap">高度 (<span class="border-b-2 border-[#a8a8a8]">H</span>) :</span>
                        <div class="w-[163px] h-[30px] flex rounded-[3px] border border-[#606060] bg-[#414141]">
                            <div class="w-[27px] flex items-center justify-center bg-[#4d4d4d] border-r border-[#606060] text-[#dcdcdc]"><svg class="w-[14px] h-[24px]"><use href="#spin"/></svg></div>
                            <div class="pl-[5px] text-[20px] leading-[24px] tracking-[1px] text-[#e0e0e0] whitespace-nowrap">23.89 <span class="ml-[4px] text-[14px] tracking-normal">mm</span></div>
                        </div>
                    </div>
                    <div class="flex items-center h-[30px]">
                        <span class="flex-1 text-right pr-[7px] whitespace-nowrap">栏间距 (<span class="border-b-2 border-[#a8a8a8]">G</span>) :</span>
                        <div class="w-[163px] h-[30px] flex rounded-[3px] border border-[#606060] bg-[#414141]">
                            <div class="w-[27px] flex items-center justify-center bg-[#4d4d4d] border-r border-[#606060] text-[#dcdcdc]"><svg class="w-[14px] h-[24px]"><use href="#spin"/></svg></div>
                            <div class="pl-[5px] text-[20px] leading-[24px] tracking-[1px] text-[#e0e0e0] whitespace-nowrap">0 <span class="ml-[4px] text-[14px] tracking-normal">mm</span></div>
                        </div>
                    </div>
                    <div class="flex items-center h-[30px]">
                        <span class="flex-1 text-right pr-[7px] whitespace-nowrap">总计 (<span class="border-b-2 border-[#a8a8a8]">T</span>) :</span>
                        <div class="w-[163px] h-[30px] flex rounded-[3px] border border-[#606060] bg-[#414141]">
                            <div class="w-[27px] flex items-center justify-center bg-[#4d4d4d] border-r border-[#606060] text-[#dcdcdc]"><svg class="w-[14px] h-[24px]"><use href="#spin"/></svg></div>
                            <div class="pl-[5px] text-[20px] leading-[24px] tracking-[1px] text-[#e0e0e0] whitespace-nowrap">238.87 <span class="ml-[4px] text-[14px] tracking-normal">mm</span></div>
                        </div>
                    </div>
                </fieldset>
                <!-- columns -->
                <fieldset class="relative w-[281px] h-[219px] rounded-[3px] border border-[#606060] pt-[26px] pr-[14px] flex flex-col gap-[16.300px]">
                    <span class="absolute left-[14px] -top-[11px] px-[2px] bg-[#535353] leading-[20px] text-[18px] text-[#a0a0a0]">列</span>
                    <div class="flex items-center h-[30px]">
                        <span class="flex-1 text-right pr-[7px] whitespace-nowrap">数量 (<span class="border-b-2 border-[#a8a8a8]">U</span>) :</span>
                        <div class="w-[163px] h-[30px] flex rounded-[3px] border-2 border-[#4a90e2] bg-white">
                            <div class="w-[26px] flex items-center justify-center bg-[#4d4d4d] text-[#dcdcdc]"><svg class="w-[14px] h-[24px]"><use href="#spin"/></svg></div>
                            <div class="pl-[4px] text-[20px] leading-[24px] text-[#666]">10</div>
                            <div class="mt-[3px] w-px h-[21px] bg-black"></div>
                        </div>
                    </div>
                    <div class="flex items-center h-[30px]">
                        <span class="flex-1 text-right pr-[7px] whitespace-nowrap">宽度 (<span class="border-b-2 border-[#a8a8a8]">W</span>) :</span>
                        <div class="w-[163px] h-[30px] flex rounded-[3px] border border-[#606060] bg-[#414141]">
                            <div class="w-[27px] flex items-center justify-center bg-[#4d4d4d] border-r border-[#606060] text-[#dcdcdc]"><svg class="w-[14px] h-[24px]"><use href="#spin"/></svg></div>
                            <div class="pl-[5px] text-[20px] leading-[24px] tracking-[1px] text-[#e0e0e0] whitespace-nowrap">20.71 <span class="ml-[4px] text-[14px] tracking-normal">mm</span></div>
                        </div>
                    </div>
                    <div class="flex items-center h-[30px]">
                        <span class="flex-1 text-right pr-[7px] whitespace-nowrap">间距 (<span class="border-b-2 border-[#a8a8a8]">E</span>) :</span>
                        <div class="w-[163px] h-[30px] flex rounded-[3px] border border-[#606060] bg-[#414141]">
                            <div class="w-[27px] flex items-center justify-center bg-[#4d4d4d] border-r border-[#606060] text-[#dcdcdc]"><svg class="w-[14px] h-[24px]"><use href="#spin"/></svg></div>
                            <div class="pl-[5px] text-[20px] leading-[24px] tracking-[1px] text-[#e0e0e0] whitespace-nowrap">0 <span class="ml-[4px] text-[14px] tracking-normal">mm</span></div>
                        </div>
                    </div>
                    <div class="flex items-center h-[30px]">
                        <span class="flex-1 text-right pr-[7px] whitespace-nowrap">总计 (<span class="border-b-2 border-[#a8a8a8]">O</span>) :</span>
                        <div class="w-[163px] h-[30px] flex rounded-[3px] border border-[#606060] bg-[#414141]">
                            <div class="w-[27px] flex items-center justify-center bg-[#4d4d4d] border-r border-[#606060] text-[#dcdcdc]"><svg class="w-[14px] h-[24px]"><use href="#spin"/></svg></div>
                            <div class="pl-[5px] text-[20px] leading-[24px] tracking-[1px] text-[#e0e0e0] whitespace-nowrap">207.09 <span class="ml-[4px] text-[14px] tracking-normal">mm</span></div>
                        </div>
                    </div>
                </fieldset>
            </div>
            <div class="mt-[17px] ml-[24px] flex items-center h-[19px] text-[#c4c4c4]">
                <div class="w-[18px] h-[18px] rounded-[3px] border border-[#bdbdbd]"></div>
                <span class="ml-[9px] tracking-[.3px]">添加参考线 (<span class="border-b-2 border-[#c4c4c4]">D</span>)</span>
            </div>
            <div class="mt-[35px] ml-[24px] mr-[23px] flex items-center justify-between h-[39px]">
                <div class="flex items-center text-[#c4c4c4]">
                    <div class="w-[18px] h-[18px] rounded-[3px] bg-[#bdbdbd] flex items-center justify-center"><svg class="w-[12px] h-[10px]" viewBox="0 0 12 10"><path d="M1 5l3.500 3.500L11 1.500" fill="none" stroke="#505050" stroke-width="2.200"/></svg></div>
                    <span class="ml-[9px] tracking-[.3px]">预览 (<span class="border-b-2 border-[#c4c4c4]">P</span>)</span>
                </div>
                <div class="flex gap-[8px] text-[18px] text-[#e4e4e4] font-['Noto_Sans_CJK_SC',sans-serif]">
                    <div class="w-[138px] h-[39px] rounded-full border-[3px] border-white flex items-center justify-center">确定</div>
                    <div class="w-[137px] h-[39px] rounded-full border-2 border-[#dcdcdc] flex items-center justify-center">取消</div>
                </div>
            </div>
            <!-- red callouts -->
            <div class="absolute left-[28px] top-[94px] w-[298px] h-[62px] rounded-[4px] border-[5px] border-[#ff2010]"></div>
            <div class="absolute left-[346px] top-[98px] w-[290px] h-[59px] rounded-[4px] border-[5px] border-[#ff2010]"></div>
            <div class="absolute left-[5px] top-[364px] w-[135px] h-[69px] rounded-[4px] border-[5px] border-[#ff2010]"></div>
        </section>

        <span class="absolute left-[1467px] top-[1234px] text-[16px] tracking-[.5px] leading-[22px] text-[#b8b8b8] font-['Liberation_Sans',sans-serif]">CSDN @qq_37964312</span>
    </div>
</body>
</html>
